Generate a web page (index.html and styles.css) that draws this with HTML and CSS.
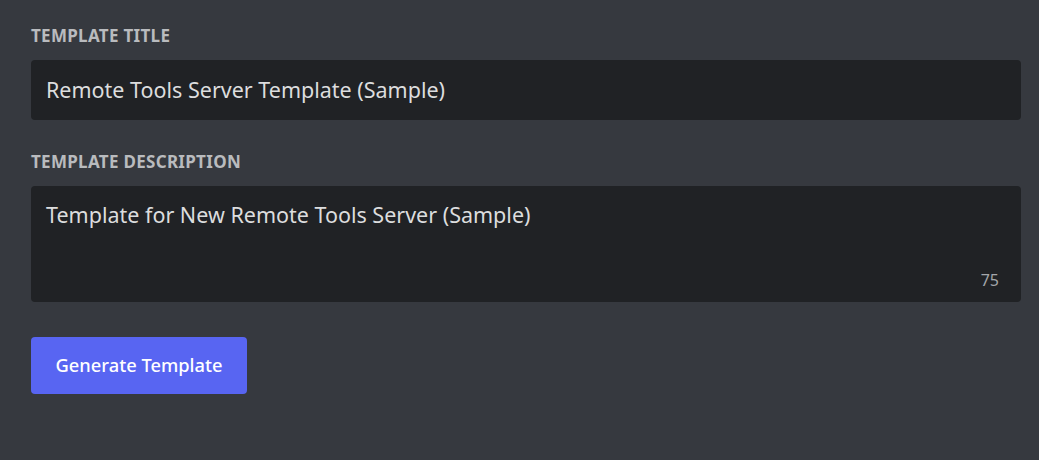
FILE: index.html
```html
<!DOCTYPE html>
<html>
<head>
<meta charset="utf-8">
<link rel="stylesheet" href="styles.css">
</head>
<body>
<div class="form">
  <div class="field">
    <div class="label">Template Title</div>
    <div class="input">Remote Tools Server Template (Sample)</div>
  </div>
  <div class="field">
    <div class="label">Template Description</div>
    <div class="textarea">
      <div class="textarea-text">Template for New Remote Tools Server (Sample)</div>
      <span class="counter">75</span>
    </div>
  </div>
  <button class="btn">Generate Template</button>
</div>
</body>
</html>
```
FILE: styles.css
```css
html, body {
  margin: 0;
  padding: 0;
  background: #36393f;
  height: 100%;
}
body {
  font-family: "Noto Sans", "Open Sans", sans-serif;
}
.form {
  padding: 26px 18px 0 31px;
  display: flex;
  flex-direction: column;
  align-items: flex-start;
}
.field {
  align-self: stretch;
  margin-bottom: 32px;
}
.field:last-of-type {
  margin-bottom: 35px;
}
.label {
  font-size: 17px;
  line-height: 20px;
  font-weight: 700;
  letter-spacing: 0.3px;
  text-transform: uppercase;
  color: #b9bbbe;
  margin-bottom: 14px;
}
.input {
  height: 60px;
  box-sizing: border-box;
  background: #202225;
  border-radius: 4px;
  padding: 0 15px 1px;
  display: flex;
  align-items: center;
  font-size: 21.5px;
  color: #dcddde;
}
.textarea {
  position: relative;
  height: 116px;
  box-sizing: border-box;
  background: #202225;
  border-radius: 4px;
  padding: 15px 15px;
}
.textarea-text {
  font-size: 21.5px;
  line-height: 28px;
  color: #dcddde;
}
.counter {
  position: absolute;
  right: 22px;
  bottom: 12px;
  font-size: 16px;
  line-height: 20px;
  color: #a3a6aa;
}
.btn {
  width: 216px;
  height: 57px;
  border: none;
  border-radius: 4px;
  background: #5865f2;
  color: #ffffff;
  font-family: "Noto Sans", "Open Sans", sans-serif;
  font-size: 18.3px;
  font-weight: 500;
  padding: 0 0 2px;
  cursor: pointer;
}
```
